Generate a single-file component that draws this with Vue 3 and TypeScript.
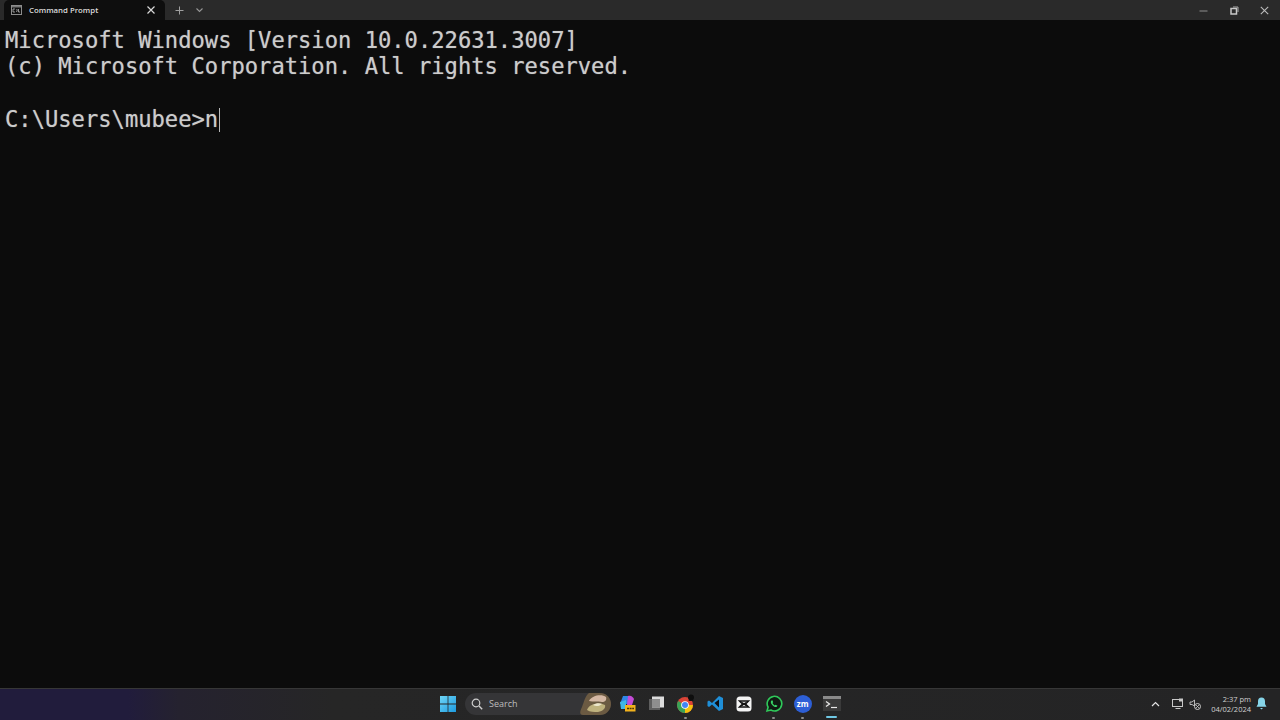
<script setup lang="ts">
const lines: string[] = [
  'Microsoft Windows [Version 10.0.22631.3007]',
  '(c) Microsoft Corporation. All rights reserved.',
  '',
]
</script>

<template>
  <div class="screen">
    <header class="titlebar">
      <div class="tab">
        <svg class="tab-icon" width="11" height="10" viewBox="0 0 11 10" fill="none">
          <rect x="0.5" y="0.5" width="10" height="9" stroke="#8c8c8c" />
          <rect x="1" y="1" width="9" height="1.500" fill="#777" />
          <path d="M2 4h2M2 4v3h2M5.500 4l.8 1-.8 2M7.500 4v3h1.500" stroke="#b8b8b8" stroke-width="0.800" />
        </svg>
        <span class="tab-title">Command Prompt</span>
        <svg class="tab-close" width="8" height="8" viewBox="0 0 8 8">
          <path d="M.5.500l7 7M7.500.500l-7 7" stroke="#d8d8d8" stroke-width="1.200" />
        </svg>
      </div>
      <div class="tab-actions">
        <svg width="9" height="9" viewBox="0 0 9 9"><path d="M4.500 0.500v8M0.500 4.500h8" stroke="#a0a0a0" /></svg>
        <svg width="9" height="6" viewBox="0 0 9 6" fill="none"><path d="M1.500 1.500l3 3 3-3" stroke="#989898" stroke-width="1.100" /></svg>
      </div>
      <div class="win-buttons">
        <svg width="9" height="9" viewBox="0 0 9 9"><path d="M.5 5h8" stroke="#8e8e8e" /></svg>
        <svg width="9" height="9" viewBox="0 0 9 9" fill="none">
          <rect x="1" y="2.500" width="5.500" height="5.500" stroke="#c8c8c8" stroke-width="1.500" />
          <path d="M3 1h5v5" stroke="#aaa" />
        </svg>
        <svg width="9" height="9" viewBox="0 0 9 9"><path d="M.8.800l7.400 7.400M8.200.800L.8 8.200" stroke="#bbb" stroke-width="1.100" /></svg>
      </div>
    </header>

    <main class="console">
      <div v-for="(line, i) in lines" :key="i" class="line">{{ line }}</div>
      <div class="line">C:\Users\mubee&gt;n<span class="caret"></span></div>
    </main>

    <footer class="taskbar">
      <div class="task-center">
        <svg class="start" width="16" height="16" viewBox="0 0 16 16">
          <defs>
            <linearGradient id="win" x1="0" y1="0" x2="1" y2="1">
              <stop offset="0" stop-color="#6fd6f7" />
              <stop offset="1" stop-color="#1d9be0" />
            </linearGradient>
          </defs>
          <path d="M0 0h7.600v7.600H0zM8.400 0H16v7.600H8.400zM0 8.400h7.600V16H0zM8.400 8.400H16V16H8.400z" fill="url(#win)" />
        </svg>

        <div class="search">
          <svg width="12" height="12" viewBox="0 0 12 12" fill="none">
            <circle cx="5" cy="5" r="3.800" stroke="#cfcfcf" stroke-width="1.200" />
            <path d="M8 8l3.200 3.200" stroke="#cfcfcf" stroke-width="1.400" />
          </svg>
          <span class="search-text">Search</span>
          <svg class="search-art" width="32" height="22" viewBox="0 0 32 22">
            <path d="M10 0h22v22H4C0 22 1 18 3 14 5 9 6 3 10 0z" fill="#6b5a42" />
            <path d="M10 8C13 2 23 1 27 4c1 3-1 5-4 5-4-1-9 0-13-1z" fill="#d4b8a4" />
            <path d="M8 17c2-6 11-8 18-5 1 3-2 6-7 7-4 0-8 0-11-2z" fill="#bfb27e" />
            <path d="M14 12c3-2 7-2 9-1-2 2-6 3-9 1z" fill="#ece6cc" />
          </svg>
        </div>

        <div class="apps">
          <div class="app">
            <svg width="17" height="17" viewBox="0 0 17 17">
              <path d="M4 1h5v8H1z" fill="#2f86e8" />
              <path d="M9 1c3-1 5 1 6 3l-2 6H8z" fill="#c44bd6" />
              <path d="M1 7l6-2v9H2z" fill="#3fb6e6" />
              <path d="M6 10h10.500v6.500H6z" fill="#f2b21c" />
              <path d="M8 13.500h7" stroke="#4d3606" stroke-width="1.600" stroke-dasharray="2 .6" />
            </svg>
          </div>
          <div class="app">
            <svg width="17" height="17" viewBox="0 0 17 17">
              <rect x="1" y="4" width="11" height="11" fill="#5e5e5e" />
              <rect x="4" y="1.500" width="12" height="11" fill="#dcdcdc" />
              <rect x="4" y="4" width="8" height="8.500" fill="#8e8e8e" />
            </svg>
          </div>
          <div class="app">
            <svg width="20" height="20" viewBox="0 0 20 20">
              <circle cx="9" cy="11" r="8" fill="#db4437" />
              <path d="M9 11h8A8 8 0 0 1 9 19z" fill="#f4c20d" />
              <path d="M9 11v8A8 8 0 0 1 2.100 7z" fill="#3aa357" />
              <circle cx="9" cy="11" r="3.800" fill="#fff" />
              <circle cx="9" cy="11" r="3" fill="#4285f4" />
              <circle cx="15" cy="3.500" r="3" fill="#0e0e0e" />
              <path d="M12.500 7c0-2.500 5-2.500 5 0z" fill="#111" />
            </svg>
            <i class="dot"></i>
          </div>
          <div class="app">
            <svg width="17" height="17" viewBox="0 0 17 17">
              <path d="M12 1l4 2v11l-4 2-7-6.500-3 2.500-1.500-1V6.500L2 5.500l3 2.500z" fill="#1f8fd8" />
              <path d="M12 4.500 7.500 8l4.500 4.500z" fill="#0e0e12" />
            </svg>
          </div>
          <div class="app">
            <svg width="16" height="16" viewBox="0 0 16 16">
              <rect width="15" height="15" x="0.500" y="0.500" rx="3.500" fill="#f4f4f4" />
              <path d="M3.500 5h9L9.500 8l3 3h-9l3-3zM6 6.500 8 8l2-1.500M6 9.500 8 8l2 1.500" fill="none" stroke="#111" stroke-width="1.500" />
            </svg>
          </div>
          <div class="app">
            <svg width="18" height="18" viewBox="0 0 18 18" fill="none">
              <path d="M2 16l1.100-3.800A7.300 7.300 0 1 1 5.900 15z" stroke="#2fc95a" stroke-width="1.600" fill="#0f1a12" />
              <path d="M6.500 5.500c-1 1-1 2.500.5 4.200 1.500 1.800 3.200 2.700 4.500 2.300l1-1.300-2-1-.9.700c-1-.5-1.700-1.300-2.100-2.300l.7-.9-.8-2z" fill="#39d466" />
            </svg>
            <i class="dot"></i>
          </div>
          <div class="app">
            <div class="zoom">zm</div>
            <i class="dot"></i>
          </div>
          <div class="app">
            <svg width="18" height="15" viewBox="0 0 18 15">
              <rect width="18" height="15" fill="#3a3a3a" />
              <rect width="18" height="3" fill="#8a8a8a" />
              <path d="M3 5.500l3.500 2.500L3 10.500" stroke="#e8e8e8" stroke-width="1.300" fill="none" />
              <path d="M8 11.500h6" stroke="#e8e8e8" stroke-width="1.200" />
            </svg>
            <i class="bar"></i>
          </div>
        </div>
      </div>

      <div class="tray">
        <svg class="chev" width="9" height="6" viewBox="0 0 9 6" fill="none"><path d="M1 5l3.500-3.500L8 5" stroke="#e4e4e4" stroke-width="1.200" /></svg>
        <svg class="tray-net" width="12" height="12" viewBox="0 0 12 12" fill="none">
          <rect x="0.500" y="1.500" width="10" height="7" stroke="#c8c8c8" />
          <rect x="7" y="0.500" width="4" height="3" fill="#c8c8c8" />
          <path d="M3.500 10.500h5" stroke="#c8c8c8" />
        </svg>
        <svg class="tray-vol" width="12" height="12" viewBox="0 0 12 12" fill="none">
          <path d="M1 4h2l2.500-2v6L3 6.500H1z" stroke="#c8c8c8" stroke-width="0.900" />
          <circle cx="8.500" cy="8.500" r="3" stroke="#c8c8c8" />
          <path d="M7 7l3 3M10 7l-3 3" stroke="#c8c8c8" stroke-width="0.800" />
        </svg>
        <div class="clock">
          <span>2:37 pm</span>
          <span>04/02/2024</span>
        </div>
        <svg class="bell" width="11" height="13" viewBox="0 0 11 13">
          <path d="M5.500 0.500c2.300 0 3.500 1.700 3.500 3.800V7l1.500 2.800H.5L2 7V4.300C2 2.200 3.200.5 5.500.5z" fill="#86d4e8" />
          <path d="M4 11h3l-1.500 1.500z" fill="#86d4e8" />
        </svg>
      </div>
    </footer>
  </div>
</template>

<style scoped>
.screen {
  width: 1280px;
  height: 720px;
  display: flex;
  flex-direction: column;
  overflow: hidden;
  background: #0c0c0c;
  font-family: "Open Sans", "Noto Sans", sans-serif;
}
.titlebar {
  height: 20px;
  display: flex;
  align-items: stretch;
  background: #2a2a2a;
  flex: none;
}
.tab {
  width: 161px;
  margin-left: 4px;
  display: flex;
  align-items: center;
  background: #0e0e0e;
  border-radius: 5px 5px 0 0;
  padding-left: 7px;
  box-sizing: border-box;
}
.tab-icon { flex: none; }
.tab-title {
  margin-left: 7px;
  font-size: 7.800px;
  font-weight: 600;
  color: #dcdcdc;
  width: 118px;
}
.tab-close { flex: none; }
.tab-actions {
  margin-left: 10px;
  display: flex;
  align-items: center;
  gap: 11px;
}
.win-buttons {
  margin-left: auto;
  width: 70px;
  margin-right: 11px;
  display: flex;
  align-items: center;
  justify-content: space-between;
}
.console {
  flex: 1;
  padding: 6.500px 0 0 5px;
  font-family: "DejaVu Sans Mono", monospace;
  font-size: 22.140px;
  line-height: 26.600px;
  color: #cccccc;
  white-space: pre;
  background: #0c0c0c;
  text-shadow: 0 0 1px rgba(204, 204, 204, 0.55);
}
.line { height: 26.600px; }
.caret {
  display: inline-block;
  width: 1px;
  height: 24px;
  margin-left: 1px;
  background: #b8b8b8;
  vertical-align: -5px;
}
.taskbar {
  height: 29px;
  padding-bottom: 2px;
  flex: none;
  display: flex;
  align-items: center;
  background: linear-gradient(90deg, #211c3c 0%, #211c3c 10%, #25222f 14%, #262626 26%, #242425 100%);
  border-top: 1px solid #373737;
}
.task-center {
  margin-left: 440px;
  display: flex;
  align-items: center;
}
.start { flex: none; }
.search {
  margin-left: 9px;
  width: 146px;
  height: 22px;
  padding-left: 6px;
  box-sizing: border-box;
  border-radius: 11px;
  background: #353537;
  display: flex;
  align-items: center;
  overflow: hidden;
}
.search-text {
  margin-left: 6px;
  font-size: 9px;
  color: #bdbdbd;
}
.search-art { margin-left: auto; flex: none; }
.apps {
  display: flex;
  align-items: center;
  margin-left: 2px;
}
.app {
  width: 29.200px;
  height: 29px;
  display: flex;
  align-items: center;
  justify-content: center;
  position: relative;
}
.dot {
  position: absolute;
  bottom: -1px;
  left: 13px;
  width: 3px;
  height: 2px;
  border-radius: 1px;
  background: #8e8e8e;
}
.bar {
  position: absolute;
  bottom: 0;
  left: 9px;
  width: 11px;
  height: 2px;
  border-radius: 1px;
  background: #6fc8e4;
}
.zoom {
  width: 18px;
  height: 18px;
  border-radius: 50%;
  background: #2d5fd6;
  color: #fff;
  font-size: 8px;
  font-weight: 700;
  line-height: 18px;
  text-align: center;
}
.tray {
  margin-left: auto;
  display: flex;
  align-items: center;
  padding-right: 13px;
}
.tray-net { margin-left: 12px; }
.tray-vol { margin-left: 5px; }
.clock {
  margin-left: 10px;
  display: flex;
  flex-direction: column;
  align-items: flex-end;
  font-size: 7.500px;
  line-height: 10px;
  color: #d0d0d0;
}
.bell { margin-left: 5px; }
</style>
